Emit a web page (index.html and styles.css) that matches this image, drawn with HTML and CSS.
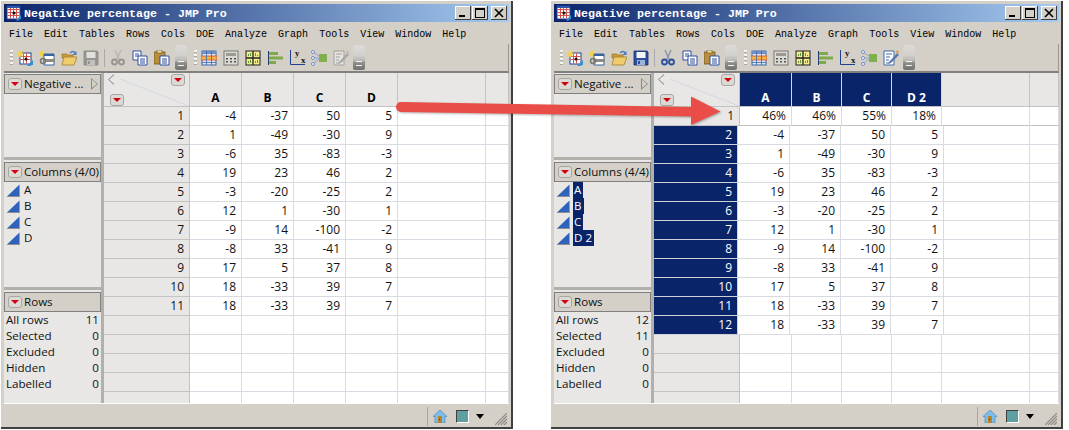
FILE: index.html
```html
<!DOCTYPE html>
<html lang="en">
<head>
<meta charset="utf-8">
<title>Negative percentage - JMP Pro</title>
<link rel="stylesheet" href="styles.css">
</head>
<body>
<svg class="sprite" aria-hidden="true">
  <symbol id="i-table" viewBox="0 0 16 16"><rect x="1" y="1" width="13" height="13" fill="#fff" stroke="#1f3f8f"/><path d="M1.500 4.500h12M1.500 7.500h12M1.500 10.500h12M4.500 1.500v12M7.500 1.500v12M10.500 1.500v12" stroke="#d8504a"/><rect x="1" y="1" width="13" height="2" fill="#2a55a8"/><circle cx="8" cy="8" r="1.600" fill="#111"/><path d="M10 15l5-5v4h-1l-2 2z" fill="#2f8fd0"/></symbol>
  <symbol id="i-new" viewBox="0 0 16 16"><rect x="3" y="3" width="11" height="11" fill="#fff" stroke="#1f3f8f"/><path d="M3.500 6.500h10M3.500 9.500h10M6.500 3.500v10M9.500 3.500v10" stroke="#d8504a"/><circle cx="9" cy="9" r="1.500" fill="#111"/><path d="M3 0l1 2 2-1-1 2 2 1-2 1 1 2-2-1-1 2-1-2-2 1 1-2-2-1 2-1-1-2 2 1z" fill="#f2d24a"/><path d="M10 16l6-6v5h-1l-2 1z" fill="#2f8fd0"/></symbol>
  <symbol id="i-script" viewBox="0 0 16 16"><path d="M3 0l1 2 2-1-1 2 2 1-2 1 1 2-2-1-1 2-1-2-2 1 1-2-2-1 2-1-1-2 2 1z" fill="#f2d24a"/><path d="M5 4h10v11H5z" fill="#fff" stroke="#39639c"/><rect x="5" y="4" width="10" height="2" fill="#39639c"/><rect x="4" y="9" width="12" height="3" fill="#8a8a86"/><circle cx="4" cy="11" r="2.500" fill="none" stroke="#77766f" stroke-width="1.500"/></symbol>
  <symbol id="i-open" viewBox="0 0 16 16"><path d="M1 4h5l1 1h5v3H1z" fill="#c99c3c" stroke="#8a6a20" stroke-width=".6"/><path d="M1 15l2-8h13l-3 8z" fill="#f0cc6a" stroke="#a37e2c" stroke-width=".8"/><path d="M9 3c2-2 4-2 5 0" fill="none" stroke="#4a77b8" stroke-width="1.300"/><path d="M15.500 1v4h-4z" fill="#4a77b8"/></symbol>
  <symbol id="i-save" viewBox="0 0 16 16"><path d="M1 1h13l1 1v13H1z" fill="#2b4f9e" stroke="#1a2f66" stroke-width=".8"/><rect x="3.500" y="2" width="9" height="6" fill="#f4f4f0"/><rect x="4" y="10" width="8" height="5" fill="#9cb2d8"/><rect x="5" y="11" width="2" height="3" fill="#2b4f9e"/></symbol>
  <symbol id="i-cut" viewBox="0 0 16 16"><path d="M5 0l4 9M11 0L7 9" stroke="#8d97a8" stroke-width="1.500"/><circle cx="4.500" cy="12" r="2.500" fill="none" stroke="#2b4f9e" stroke-width="1.800"/><circle cx="11.500" cy="12" r="2.500" fill="none" stroke="#2b4f9e" stroke-width="1.800"/></symbol>
  <symbol id="i-copy" viewBox="0 0 16 16"><path d="M1 1h8v9H1z" fill="#fff" stroke="#2b4f9e"/><path d="M3 4h4M3 6h4" stroke="#2b4f9e"/><path d="M6 6h9v9H6z" fill="#fff" stroke="#2b4f9e"/><path d="M8 9h5M8 11h5M8 13h5" stroke="#2b4f9e"/></symbol>
  <symbol id="i-paste" viewBox="0 0 16 16"><rect x="0" y="2" width="11" height="12" fill="#b98f3e" stroke="#6f5520" stroke-width=".8"/><rect x="3" y="0" width="5" height="3" fill="#e8d9a0" stroke="#6f5520" stroke-width=".6"/><path d="M6 6h9v9H6z" fill="#fff" stroke="#2b4f9e"/><path d="M8 9h5M8 11h5M8 13h5" stroke="#2b4f9e"/></symbol>
  <symbol id="i-tab" viewBox="0 0 16 16"><rect x="1" y="1" width="14" height="14" fill="#dde6f4" stroke="#3f68a8"/><rect x="1" y="1" width="14" height="3" fill="#6d8fc4"/><rect x="0" y="6" width="16" height="4" fill="#f0b24a" stroke="#d8502c" stroke-width=".8"/><path d="M5.500 1v14M10.500 1v14M1 12.500h14" stroke="#3f68a8" stroke-width=".8"/></symbol>
  <symbol id="i-calc" viewBox="0 0 16 16"><rect x="1" y="1" width="14" height="14" fill="#dcdad4" stroke="#77766f"/><rect x="3" y="3" width="10" height="3" fill="#9c9a92"/><path d="M3 8h2v1.500H3zM7 8h2v1.500H7zM11 8h2v1.500h-2zM3 11h2v1.500H3zM7 11h2v1.500H7zM11 11h2v1.500h-2z" fill="#55544e"/></symbol>
  <symbol id="i-dash" viewBox="0 0 16 16"><rect x="1" y="1" width="14" height="14" fill="#f4ec8c" stroke="#222"/><path d="M8 1v14M1 8h14" stroke="#222" stroke-width="1.300"/><path d="M3.500 6V4M5.500 6V3M10.500 6V3M12.500 6V5M3.500 13v-2M5.500 13v-3M10.500 13v-2M12.500 13v-3" stroke="#5f9a3c"/></symbol>
  <symbol id="i-bars" viewBox="0 0 16 16"><path d="M1 1h1v14H1z" fill="#1f3f70"/><path d="M2 2h9v3H2zM2 6.500h14v3H2zM2 11h7v3H2z" fill="#7fa94a"/></symbol>
  <symbol id="i-yx" viewBox="0 0 16 16"><path d="M1.500 0v14.500H16" fill="none" stroke="#1f3f8f"/></symbol>
  <symbol id="i-net" viewBox="0 0 16 16"><rect x="8" y="4" width="8" height="8" fill="#7fb04c"/><path d="M1 1l8 6M1 8h8M1 15l8-7" stroke="#8fa4c8"/><circle cx="2" cy="2" r="1.500" fill="#fff" stroke="#6d8fc4"/><circle cx="2" cy="8" r="1.500" fill="#fff" stroke="#6d8fc4"/><circle cx="2" cy="14" r="1.500" fill="#fff" stroke="#6d8fc4"/></symbol>
  <symbol id="i-edit" viewBox="0 0 16 16"><path d="M1 1h10v14H1z" fill="#fff" stroke="#3f68a8"/><path d="M3 4h6M3 7h4M3 10h3M3 13h3" stroke="#3f68a8"/><path d="M6 12l8-9 2 2-8 8-3 1z" fill="#5a7ab0"/><path d="M13 2l1-2 2 2-1 2z" fill="#e8964a"/></symbol>
  <symbol id="i-home" viewBox="0 0 14 13"><path d="M7 0L0 6.500h2V13h10V6.500h2z" fill="#7fbce8" stroke="#3a82bc" stroke-width=".6"/><rect x="5" y="6" width="4" height="7" fill="#b5842c"/><rect x="6" y="9" width="1" height="1" fill="#333"/></symbol>
  <symbol id="i-col" viewBox="0 0 13 13"><path d="M12.500 .5V12H.5z" fill="#2f62bc"/><path d="M0 12.500h13" stroke="#8e8e8e"/><path d="M12.500 1v11" stroke="#7ea0d8"/></symbol>
</svg>

<section class="window">
  <header class="titlebar"><svg class="ti"><use href="#i-table"/></svg><span class="titletext">Negative percentage - JMP Pro</span><span class="wb"><svg viewBox="0 0 16 14"><rect x="4" y="9" width="6" height="2"/></svg></span><span class="wb"><svg viewBox="0 0 16 14"><path d="M3 2h10v10H3zM4 4v7h8V4z" fill-rule="evenodd"/></svg></span><span class="wb close"><svg viewBox="0 0 16 14"><path d="M4 3l8 8M12 3l-8 8" stroke="#000" stroke-width="1.600"/></svg></span></header>
  <nav class="menu"><span>File</span><span>Edit</span><span>Tables</span><span>Rows</span><span>Cols</span><span>DOE</span><span>Analyze</span><span>Graph</span><span>Tools</span><span>View</span><span>Window</span><span>Help</span></nav>
  <div class="toolbar">
    <i class="grip"></i>
    <span class="b"><svg><use href="#i-new"/></svg></span><span class="b"><svg><use href="#i-script"/></svg></span><span class="b"><svg><use href="#i-open"/></svg></span><span class="b off"><svg><use href="#i-save"/></svg></span>
    <i class="tsep"></i>
    <span class="b off"><svg><use href="#i-cut"/></svg></span><span class="b"><svg><use href="#i-copy"/></svg></span><span class="b"><svg><use href="#i-paste"/></svg></span>
    <i class="chev"></i><i class="grip g2"></i>
    <span class="b"><svg><use href="#i-tab"/></svg></span><span class="b"><svg><use href="#i-calc"/></svg></span><span class="b"><svg><use href="#i-dash"/></svg></span><span class="b"><svg><use href="#i-bars"/></svg></span>
    <span class="b yx"><svg><use href="#i-yx"/></svg><b class="yy">y</b><b class="xx">x</b></span>
    <span class="b"><svg><use href="#i-net"/></svg></span><span class="b off"><svg><use href="#i-edit"/></svg></span>
    <i class="chev c2"></i>
  </div>
  <div class="main">
    <aside class="side">
      <div class="phead"><i class="caret"></i><span class="ptext">Negative ...</span><i class="tri-r"></i></div>
      <div class="pbody p1"></div>
      <div class="psep"></div>
      <div class="phead"><i class="caret"></i><span class="ptext">Columns (4/0)</span></div>
      <div class="pbody p2">
        <div class="col"><svg><use href="#i-col"/></svg><span>A</span></div>
        <div class="col"><svg><use href="#i-col"/></svg><span>B</span></div>
        <div class="col"><svg><use href="#i-col"/></svg><span>C</span></div>
        <div class="col"><svg><use href="#i-col"/></svg><span>D</span></div>
      </div>
      <div class="psep"></div>
      <div class="phead"><i class="caret"></i><span class="ptext">Rows</span></div>
      <div class="pbody">
        <div class="stat"><span>All rows</span><span>11</span></div>
        <div class="stat"><span>Selected</span><span>0</span></div>
        <div class="stat"><span>Excluded</span><span>0</span></div>
        <div class="stat"><span>Hidden</span><span>0</span></div>
        <div class="stat"><span>Labelled</span><span>0</span></div>
      </div>
    </aside>
    <div class="table">
      <div class="grid hd cols-a">
        <div class="corner"><i class="tri-l"></i><i class="caret c-top"></i><i class="caret c-bot"></i><svg class="diag" viewBox="0 0 85 33"><path d="M16 6L85 33" stroke="#d6d6e4"/></svg></div>
        <div>A</div><div>B</div><div>C</div><div>D</div><div></div><div></div>
      </div>
      <div class="grid body cols-a">
        <span class="h">1</span><span>-4</span><span>-37</span><span>50</span><span>5</span><span></span><span></span>
        <span class="h">2</span><span>1</span><span>-49</span><span>-30</span><span>9</span><span></span><span></span>
        <span class="h">3</span><span>-6</span><span>35</span><span>-83</span><span>-3</span><span></span><span></span>
        <span class="h">4</span><span>19</span><span>23</span><span>46</span><span>2</span><span></span><span></span>
        <span class="h">5</span><span>-3</span><span>-20</span><span>-25</span><span>2</span><span></span><span></span>
        <span class="h">6</span><span>12</span><span>1</span><span>-30</span><span>1</span><span></span><span></span>
        <span class="h">7</span><span>-9</span><span>14</span><span>-100</span><span>-2</span><span></span><span></span>
        <span class="h">8</span><span>-8</span><span>33</span><span>-41</span><span>9</span><span></span><span></span>
        <span class="h">9</span><span>17</span><span>5</span><span>37</span><span>8</span><span></span><span></span>
        <span class="h">10</span><span>18</span><span>-33</span><span>39</span><span>7</span><span></span><span></span>
        <span class="h">11</span><span>18</span><span>-33</span><span>39</span><span>7</span><span></span><span></span>
        <span class="h"></span><span></span><span></span><span></span><span></span><span></span><span></span>
        <span class="h"></span><span></span><span></span><span></span><span></span><span></span><span></span>
        <span class="h"></span><span></span><span></span><span></span><span></span><span></span><span></span>
        <span class="h"></span><span></span><span></span><span></span><span></span><span></span><span></span>
        <span class="h"></span><span></span><span></span><span></span><span></span><span></span><span></span>
      </div>
    </div>
  </div>
  <footer class="status"><i class="ssep"></i><svg class="home"><use href="#i-home"/></svg><i class="swatch"></i><i class="tri-d"></i><svg class="resize" viewBox="0 0 12 12"><path d="M0 12L12 0M3 12L12 3M6 12l6-6M9 12l3-3" stroke="#8c8a84" stroke-width="1.200"/></svg></footer>
</section>

<section class="window">
  <header class="titlebar"><svg class="ti"><use href="#i-table"/></svg><span class="titletext">Negative percentage - JMP Pro</span><span class="wb"><svg viewBox="0 0 16 14"><rect x="4" y="9" width="6" height="2"/></svg></span><span class="wb"><svg viewBox="0 0 16 14"><path d="M3 2h10v10H3zM4 4v7h8V4z" fill-rule="evenodd"/></svg></span><span class="wb close"><svg viewBox="0 0 16 14"><path d="M4 3l8 8M12 3l-8 8" stroke="#000" stroke-width="1.600"/></svg></span></header>
  <nav class="menu"><span>File</span><span>Edit</span><span>Tables</span><span>Rows</span><span>Cols</span><span>DOE</span><span>Analyze</span><span>Graph</span><span>Tools</span><span>View</span><span>Window</span><span>Help</span></nav>
  <div class="toolbar">
    <i class="grip"></i>
    <span class="b"><svg><use href="#i-new"/></svg></span><span class="b"><svg><use href="#i-script"/></svg></span><span class="b"><svg><use href="#i-open"/></svg></span><span class="b"><svg><use href="#i-save"/></svg></span>
    <i class="tsep"></i>
    <span class="b"><svg><use href="#i-cut"/></svg></span><span class="b"><svg><use href="#i-copy"/></svg></span><span class="b"><svg><use href="#i-paste"/></svg></span>
    <i class="chev"></i><i class="grip g2"></i>
    <span class="b"><svg><use href="#i-tab"/></svg></span><span class="b"><svg><use href="#i-calc"/></svg></span><span class="b"><svg><use href="#i-dash"/></svg></span><span class="b"><svg><use href="#i-bars"/></svg></span>
    <span class="b yx"><svg><use href="#i-yx"/></svg><b class="yy">y</b><b class="xx">x</b></span>
    <span class="b"><svg><use href="#i-net"/></svg></span><span class="b"><svg><use href="#i-edit"/></svg></span>
    <i class="chev c2"></i>
  </div>
  <div class="main">
    <aside class="side">
      <div class="phead"><i class="caret"></i><span class="ptext">Negative ...</span><i class="tri-r"></i></div>
      <div class="pbody p1"></div>
      <div class="psep"></div>
      <div class="phead"><i class="caret"></i><span class="ptext">Columns (4/4)</span></div>
      <div class="pbody p2">
        <div class="col sel"><svg><use href="#i-col"/></svg><span>A</span></div>
        <div class="col sel"><svg><use href="#i-col"/></svg><span>B</span></div>
        <div class="col sel"><svg><use href="#i-col"/></svg><span>C</span></div>
        <div class="col sel"><svg><use href="#i-col"/></svg><span>D 2</span></div>
      </div>
      <div class="psep"></div>
      <div class="phead"><i class="caret"></i><span class="ptext">Rows</span></div>
      <div class="pbody">
        <div class="stat"><span>All rows</span><span>12</span></div>
        <div class="stat"><span>Selected</span><span>11</span></div>
        <div class="stat"><span>Excluded</span><span>0</span></div>
        <div class="stat"><span>Hidden</span><span>0</span></div>
        <div class="stat"><span>Labelled</span><span>0</span></div>
      </div>
    </aside>
    <div class="table">
      <div class="grid hd cols-b selhead">
        <div class="corner"><i class="tri-l"></i><i class="caret c-top"></i><i class="caret c-bot"></i><svg class="diag" viewBox="0 0 85 33"><path d="M16 6L85 33" stroke="#d6d6e4"/></svg></div>
        <div>A</div><div>B</div><div>C</div><div>D 2</div><div></div><div></div>
      </div>
      <div class="grid body cols-b first">
        <span class="h">1</span><span>46%</span><span>46%</span><span>55%</span><span>18%</span><span></span><span></span>
      </div>
      <div class="grid body cols-c">
        <span class="h s">2</span><span>-4</span><span>-37</span><span>50</span><span>5</span><span></span><span></span>
        <span class="h s">3</span><span>1</span><span>-49</span><span>-30</span><span>9</span><span></span><span></span>
        <span class="h s">4</span><span>-6</span><span>35</span><span>-83</span><span>-3</span><span></span><span></span>
        <span class="h s">5</span><span>19</span><span>23</span><span>46</span><span>2</span><span></span><span></span>
        <span class="h s">6</span><span>-3</span><span>-20</span><span>-25</span><span>2</span><span></span><span></span>
        <span class="h s">7</span><span>12</span><span>1</span><span>-30</span><span>1</span><span></span><span></span>
        <span class="h s">8</span><span>-9</span><span>14</span><span>-100</span><span>-2</span><span></span><span></span>
        <span class="h s">9</span><span>-8</span><span>33</span><span>-41</span><span>9</span><span></span><span></span>
        <span class="h s">10</span><span>17</span><span>5</span><span>37</span><span>8</span><span></span><span></span>
        <span class="h s">11</span><span>18</span><span>-33</span><span>39</span><span>7</span><span></span><span></span>
        <span class="h s">12</span><span>18</span><span>-33</span><span>39</span><span>7</span><span></span><span></span>
      </div>
      <div class="grid body cols-b">
        <span class="h"></span><span></span><span></span><span></span><span></span><span></span><span></span>
        <span class="h"></span><span></span><span></span><span></span><span></span><span></span><span></span>
        <span class="h"></span><span></span><span></span><span></span><span></span><span></span><span></span>
        <span class="h"></span><span></span><span></span><span></span><span></span><span></span><span></span>
      </div>
    </div>
  </div>
  <footer class="status"><i class="ssep"></i><svg class="home"><use href="#i-home"/></svg><i class="swatch"></i><i class="tri-d"></i><svg class="resize" viewBox="0 0 12 12"><path d="M0 12L12 0M3 12L12 3M6 12l6-6M9 12l3-3" stroke="#8c8a84" stroke-width="1.200"/></svg></footer>
</section>

<svg class="arrow" viewBox="0 0 1069 430" aria-hidden="true"><path d="M401 102L691 107V96.500L720.500 111.500L691 125V116.500L401 112A5 5 0 0 1 401 102Z"/></svg>
</body>
</html>
```
FILE: styles.css
```css
* { box-sizing: border-box; }
html, body { margin: 0; height: 100%; background: #fff; overflow: hidden; }
body {
  position: relative;
  width: 1069px;
  height: 430px;
  display: flex;
  gap: 38px;
  padding: 1px 0 0 1px;
  font: 11.6px/16px "Open Sans", "Liberation Sans", sans-serif;
  color: #111;
}
i { font-style: normal; display: block; flex: none; }

.sprite { width: 0; height: 0; position: absolute; }

.window {
  width: 512px;
  height: 428px;
  flex: none;
  background: #d4d0c8;
  padding: 3px 2px 2px 3px;
  border-right: 2px solid #404040;
  border-bottom: 2px solid #404040;
  display: flex;
  flex-direction: column;
}

/* title bar */
.titlebar {
  height: 18px;
  flex: none;
  display: flex;
  align-items: center;
  gap: 1px;
  padding: 0 2px;
  background: linear-gradient(90deg, #0a246a, #a6caf0);
}
.ti { width: 16px; height: 16px; flex: none; }
.titletext {
  flex: 1;
  margin-left: 1px;
  padding-top: 2px;
  font: bold 11.67px/18px "Liberation Mono", monospace;
  color: #fff;
}
.wb {
  width: 16px;
  height: 14px;
  flex: none;
  background: #d4d0c8;
  box-shadow: inset -1px -1px #404040, inset 1px 1px #fff;
}
.wb svg { display: block; width: 16px; height: 14px; }
.wb.close { margin-left: 2px; }

/* menu */
.menu {
  height: 22px;
  flex: none;
  display: flex;
  align-items: center;
  padding: 4px 0 0 5px;
  font: 10px/18px "Liberation Mono", monospace;
  color: #000;
}
.menu span { margin-right: 11px; }

/* toolbar */
.toolbar {
  height: 29px;
  flex: none;
  display: flex;
  align-items: center;
  padding-left: 6px;
  border-bottom: 2px solid #808080;
  border-right: 1px solid #9a9890;
}
.grip {
  width: 3px;
  height: 15px;
  margin-right: 1px;
  background: repeating-linear-gradient(#f4f4f0 0 2px, #a8a8a0 2px 3px, #d4d0c8 3px 4px);
}
.g2 { margin-left: 7px; margin-right: 1px; }
.b { width: 22px; height: 16px; flex: none; display: flex; justify-content: center; position: relative; }
.b svg { width: 16px; height: 16px; display: block; }
.b.off svg { filter: grayscale(1) opacity(.45); }
.tsep { width: 1px; height: 18px; margin: 0 2px; background: #a9a9ad; }
.chev {
  position: relative;
  width: 12px;
  height: 25px;
  margin-left: 2px;
  border-radius: 3px 3px 2px 2px;
  background: linear-gradient(#dcdbd7 0, #d2d1cd 40%, #b8b7b3 62%, #8c8c8a 72%, #727270 100%);
}
.chev::after {
  content: "";
  position: absolute;
  left: 3px;
  bottom: 4px;
  width: 6px;
  height: 3px;
  border-top: 1px solid #f4f4f4;
  border-bottom: 1px solid #f4f4f4;
}
.c2 { margin-left: 1px; }
.yy, .xx {
  position: absolute;
  font: bold 9px/9px "Liberation Serif", serif;
  color: #111;
}
.yy { left: 9px; top: -1px; }
.xx { left: 15px; top: 6px; }

/* main split */
.main { height: 330px; flex: none; display: flex; border-bottom: 1px solid #fff; box-sizing: content-box; }
.side {
  width: 100px;
  flex: none;
  background: #e8e7e5;
  border-right: 3px solid #b2b0aa;
  padding-top: 1px;
}
.phead {
  height: 20px;
  display: flex;
  align-items: center;
  padding-left: 3px;
  background: #d4d0c8;
  border: 1px solid #808080;
}
.ptext { margin-left: 2px; white-space: nowrap; color: #111; }
.caret {
  width: 14px;
  height: 12px;
  position: relative;
  flex: none;
  background: #dcdad5;
  border: 1px solid #a8a6a0;
  border-radius: 3px;
}
.caret::after {
  content: "";
  position: absolute;
  left: 2px;
  top: 3px;
  border-style: solid;
  border-width: 4px 4px 0;
  border-color: #d40010 transparent transparent;
}
.tri-r {
  margin-left: auto;
  margin-right: 2px;
  width: 7px;
  height: 12px;
  background: #8a8a88;
  clip-path: polygon(0 0, 100% 50%, 0 100%, 0 90%, 85% 50%, 15% 12%, 15% 88%, 0 90%);
}
.p1 { height: 63px; }
.p2 { height: 105px; }
.psep { height: 3px; margin-bottom: 2px; background: #b2b0aa; }
.col { height: 16px; display: flex; align-items: center; padding-left: 3px; }
.col svg { width: 13px; height: 13px; flex: none; margin-right: 3px; }
.col span { padding: 0 1px; height: 16px; min-width: 8px; }
.col.sel span { background: #0a246a; color: #fff; padding: 0 2px 0 1px; }
.stat { height: 16px; display: flex; justify-content: space-between; padding: 0 2px; color: #111; }

/* table */
.table { flex: 1; min-width: 0; height: 330px; overflow: hidden; }
.grid { display: grid; }
.cols-a { grid-template-columns: 86px 52px 52px 52px 52px 88px 23px; }
.cols-b { grid-template-columns: 86px 52px 50px 50px 50px 88px 29px; }
.cols-c { grid-template-columns: 84px 52px 51px 50px 53px 86px 29px; }
.hd { height: 34px; }
.hd > div {
  background: #e8e7e5;
  border-right: 1px solid #c2c2c2;
  border-bottom: 1px solid #c2c2c2;
  text-align: center;
  font-weight: 700;
  font-size: 12px;
  line-height: 16px;
  padding-top: 17px;
  color: #000;
}
.selhead > div:nth-child(n+2):nth-child(-n+5) { background: #0a246a; color: #fff; border-right-color: #d8d8d8; }
.corner { position: relative; }
.corner .caret { position: absolute; }
.c-top { left: 67px; top: 1px; }
.c-bot { left: 6px; top: 21px; }
.tri-l {
  position: absolute;
  left: 4px;
  top: 1px;
  width: 6px;
  height: 11px;
  background: #8a8a88;
  clip-path: polygon(100% 0, 0 50%, 100% 100%, 100% 88%, 18% 50%, 100% 12%);
}
.diag { position: absolute; left: 0; top: 0; width: 85px; height: 33px; }
.body { grid-auto-rows: 19px; }
.body span {
  background: #fff;
  border-right: 1px solid #dadae2;
  border-bottom: 1px solid #dadae2;
  text-align: right;
  padding-right: 5px;
  font-size: 12px;
  line-height: 18px;
  color: #111;
}
.body .h { background: #e8e7e5; border-color: #c2c2c2; }
.body .s { background: #0a246a; color: #fff; border-right-color: #d0d0d8; border-bottom-color: #d0d0d8; }
.first span { border-bottom-color: #c2c2c2; }

/* status */
.status { height: 22px; flex: none; display: flex; align-items: center; padding-top: 2px; }
.ssep { width: 1px; height: 19px; margin-left: 423px; background: #a8a6a0; }
.home { width: 14px; height: 13px; margin-left: 5px; flex: none; }
.swatch {
  width: 13px;
  height: 13px;
  margin-left: 9px;
  background: #5f9fa0;
  border: 1px solid;
  border-color: #404040 #fff #fff #404040;
}
.tri-d {
  margin-left: 7px;
  border-style: solid;
  border-width: 5px 4px 0;
  border-color: #000 transparent transparent;
}
.resize { width: 12px; height: 12px; margin-left: 11px; margin-top: 6px; flex: none; }

/* annotation arrow */
.arrow {
  position: absolute;
  left: 0;
  top: 0;
  width: 1069px;
  height: 430px;
  pointer-events: none;
  filter: drop-shadow(1px 1px 1px rgba(0, 0, 0, .3));
}
.arrow path { fill: #ea4d47; }
```
